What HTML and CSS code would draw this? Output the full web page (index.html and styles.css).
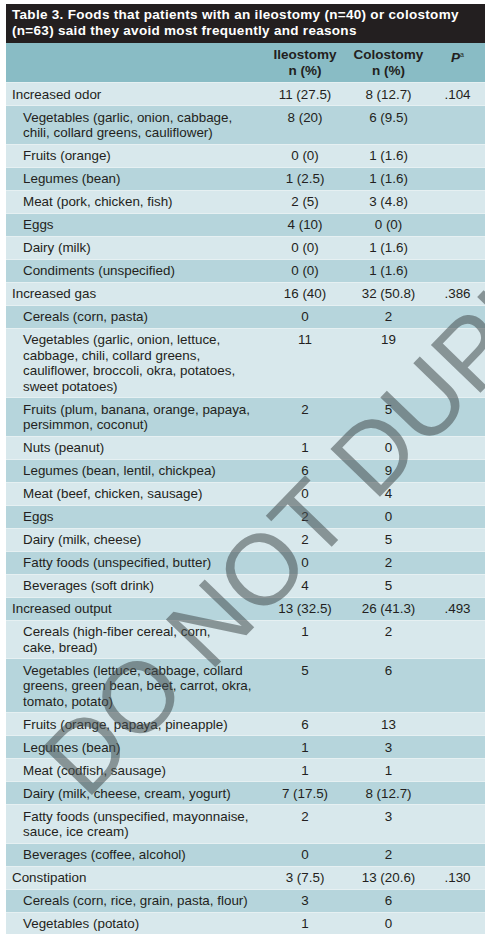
FILE: index.html
```html
<!DOCTYPE html>
<html lang="en">
<head>
    <meta charset="UTF-8">
    <title>Table 3. Foods avoided after ostomy</title>
    <link rel="stylesheet" href="styles.css">
</head>
<body>
<div class="sheet">
    <div class="caption">Table 3. Foods that patients with an ileostomy (n=40) or colostomy<br>(n=63) said they avoid most frequently and reasons</div>
    <table class="foods">
        <thead>
            <tr>
                <th class="item"></th>
                <th>Ileostomy<br>n (%)</th>
                <th>Colostomy<br>n (%)</th>
                <th class="p"><i>P</i><sup>a</sup></th>
            </tr>
        </thead>
        <tbody>
            <tr class="main"><td class="item">Increased odor</td><td>11 (27.5)</td><td>8 (12.7)</td><td>.104</td></tr>
            <tr><td class="item">Vegetables (garlic, onion, cabbage,<br>chili, collard greens, cauliflower)</td><td>8 (20)</td><td>6 (9.5)</td><td></td></tr>
            <tr><td class="item">Fruits (orange)</td><td>0 (0)</td><td>1 (1.6)</td><td></td></tr>
            <tr><td class="item">Legumes (bean)</td><td>1 (2.5)</td><td>1 (1.6)</td><td></td></tr>
            <tr><td class="item">Meat (pork, chicken, fish)</td><td>2 (5)</td><td>3 (4.8)</td><td></td></tr>
            <tr><td class="item">Eggs</td><td>4 (10)</td><td>0 (0)</td><td></td></tr>
            <tr><td class="item">Dairy (milk)</td><td>0 (0)</td><td>1 (1.6)</td><td></td></tr>
            <tr><td class="item">Condiments (unspecified)</td><td>0 (0)</td><td>1 (1.6)</td><td></td></tr>
            <tr class="main"><td class="item">Increased gas</td><td>16 (40)</td><td>32 (50.8)</td><td>.386</td></tr>
            <tr><td class="item">Cereals (corn, pasta)</td><td>0</td><td>2</td><td></td></tr>
            <tr><td class="item">Vegetables (garlic, onion, lettuce,<br>cabbage, chili, collard greens,<br>cauliflower, broccoli, okra, potatoes,<br>sweet potatoes)</td><td>11</td><td>19</td><td></td></tr>
            <tr><td class="item">Fruits (plum, banana, orange, papaya,<br>persimmon, coconut)</td><td>2</td><td>5</td><td></td></tr>
            <tr><td class="item">Nuts (peanut)</td><td>1</td><td>0</td><td></td></tr>
            <tr><td class="item">Legumes (bean, lentil, chickpea)</td><td>6</td><td>9</td><td></td></tr>
            <tr><td class="item">Meat (beef, chicken, sausage)</td><td>0</td><td>4</td><td></td></tr>
            <tr><td class="item">Eggs</td><td>2</td><td>0</td><td></td></tr>
            <tr><td class="item">Dairy (milk, cheese)</td><td>2</td><td>5</td><td></td></tr>
            <tr><td class="item">Fatty foods (unspecified, butter)</td><td>0</td><td>2</td><td></td></tr>
            <tr><td class="item">Beverages (soft drink)</td><td>4</td><td>5</td><td></td></tr>
            <tr class="main"><td class="item">Increased output</td><td>13 (32.5)</td><td>26 (41.3)</td><td>.493</td></tr>
            <tr><td class="item">Cereals (high-fiber cereal, corn,<br>cake, bread)</td><td>1</td><td>2</td><td></td></tr>
            <tr><td class="item">Vegetables (lettuce, cabbage, collard<br>greens, green bean, beet, carrot, okra,<br>tomato, potato)</td><td>5</td><td>6</td><td></td></tr>
            <tr><td class="item">Fruits (orange, papaya, pineapple)</td><td>6</td><td>13</td><td></td></tr>
            <tr><td class="item">Legumes (bean)</td><td>1</td><td>3</td><td></td></tr>
            <tr><td class="item">Meat (codfish, sausage)</td><td>1</td><td>1</td><td></td></tr>
            <tr><td class="item">Dairy (milk, cheese, cream, yogurt)</td><td>7 (17.5)</td><td>8 (12.7)</td><td></td></tr>
            <tr><td class="item">Fatty foods (unspecified, mayonnaise,<br>sauce, ice cream)</td><td>2</td><td>3</td><td></td></tr>
            <tr><td class="item">Beverages (coffee, alcohol)</td><td>0</td><td>2</td><td></td></tr>
            <tr class="main"><td class="item">Constipation</td><td>3 (7.5)</td><td>13 (20.6)</td><td>.130</td></tr>
            <tr><td class="item">Cereals (corn, rice, grain, pasta, flour)</td><td>3</td><td>6</td><td></td></tr>
            <tr><td class="item">Vegetables (potato)</td><td>1</td><td>0</td><td></td></tr>
        </tbody>
    </table>
    <div class="stamp">DO NOT DUPLICATE</div>
</div>
</body>
</html>
```

FILE: styles.css
```css
body { margin: 0; background: #fff; font-family: "Liberation Sans", Arial, sans-serif; color: #231f20; overflow: hidden; }
.sheet { position: relative; margin: 4px 4px 0 6px; width: 479px; overflow: hidden; }
.caption {
    background: #231f20; color: #fff; font-weight: bold; white-space: nowrap;
    font-size: 13.5px; line-height: 16px; padding: 3px 6px 4px; letter-spacing: 0.3px;
}
.foods { width: 479px; border-collapse: collapse; table-layout: fixed; font-size: 13.4px; }
.foods th { background: #89bcc5; font-weight: bold; font-size: 13.5px; line-height: 16px; padding: 4px 0 3px; text-align: center; vertical-align: top; }
.foods th.item { width: 257px; }
.foods th:nth-child(2) { width: 84px; }
.foods th:nth-child(3) { width: 83px; }
.foods th.p sup { font-size: 7px; font-weight: normal; vertical-align: 5px; }
.foods td { line-height: 15.5px; padding: 3.5px 0 3px; text-align: center; vertical-align: top; border-top: 1px solid #e6f0f2; white-space: nowrap; }
.foods td.item { text-align: left; padding-left: 17px; }
.foods tr.main td.item { padding-left: 6px; }
.foods tbody tr { background: #d8e8ec; }
.foods tbody tr:nth-child(even) { background: #b6d5dc; }
/* watermark lies over the table */
.stamp {
    position: absolute; left: 19px; top: 738px; transform: rotate(-46deg); transform-origin: 0 0;
    font-size: 100px; line-height: 1; color: rgba(70, 78, 80, 0.55); white-space: nowrap; pointer-events: none;
}
```
